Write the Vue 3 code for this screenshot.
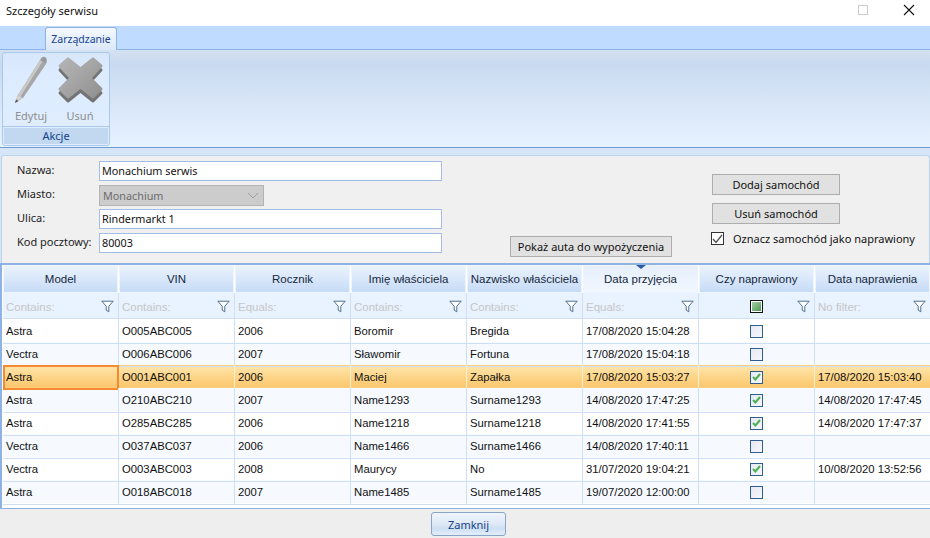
<script setup>
const columns = [
  { title: "Model", filter: "Contains:" },
  { title: "VIN", filter: "Contains:" },
  { title: "Rocznik", filter: "Equals:" },
  { title: "Imię właściciela", filter: "Contains:" },
  { title: "Nazwisko właściciela", filter: "Contains:" },
  { title: "Data przyjęcia", filter: "Equals:", sorted: true },
  { title: "Czy naprawiony", filter: "", tri: true },
  { title: "Data naprawienia", filter: "No filter:" },
];
const rows = [
  ["Astra", "O005ABC005", "2006", "Boromir", "Bregida", "17/08/2020 15:04:28", false, ""],
  ["Vectra", "O006ABC006", "2007", "Sławomir", "Fortuna", "17/08/2020 15:04:18", false, ""],
  ["Astra", "O001ABC001", "2006", "Maciej", "Zapałka", "17/08/2020 15:03:27", true, "17/08/2020 15:03:40"],
  ["Astra", "O210ABC210", "2007", "Name1293", "Surname1293", "14/08/2020 17:47:25", true, "14/08/2020 17:47:45"],
  ["Astra", "O285ABC285", "2006", "Name1218", "Surname1218", "14/08/2020 17:41:55", true, "14/08/2020 17:47:37"],
  ["Vectra", "O037ABC037", "2006", "Name1466", "Surname1466", "14/08/2020 17:40:11", false, ""],
  ["Vectra", "O003ABC003", "2008", "Maurycy", "No", "31/07/2020 19:04:21", true, "10/08/2020 13:52:56"],
  ["Astra", "O018ABC018", "2007", "Name1485", "Surname1485", "19/07/2020 12:00:00", false, ""],
];
const selected = 2;
</script>

<template>
  <div class="window">
    <div class="titlebar">
      <span class="title">Szczegóły serwisu</span>
      <div class="winbtns">
        <svg width="12" height="12" viewBox="0 0 12 12"><rect x="1.5" y="1.5" width="9" height="9" fill="none" stroke="#cccccc" /></svg>
        <svg width="12" height="12" viewBox="0 0 12 12"><path d="M1 1L11 11M11 1L1 11" stroke="#111" stroke-width="1.1" /></svg>
      </div>
    </div>

    <div class="tabstrip">
      <div class="tab">Zarządzanie</div>
    </div>

    <div class="ribbon">
      <div class="group">
        <div class="group-items">
          <div class="rbtn">
            <svg width="34" height="48" viewBox="0 0 34 48">
              <path d="M1 47L4 39L26 4L32 8L9 42Z" fill="#a6a6a6" />
              <path d="M4 39L26 4L28.5 5.5L6.5 40.5Z" fill="#c8c8c8" />
              <path d="M26 4Q28 0 31 1Q34 3 32 8Z" fill="#999999" />
              <path d="M1 47L4 39L9 42Z" fill="#cfcfcf" />
              <path d="M1 47L2 43.5L4.5 45Z" fill="#555" />
            </svg>
            <span>Edytuj</span>
          </div>
          <div class="rbtn">
            <svg width="47" height="48" viewBox="0 0 47 48">
              <defs>
                <linearGradient id="xface" x1="0" y1="0" x2="1" y2="1">
                  <stop offset="0" stop-color="#b4b4b4" />
                  <stop offset="0.5" stop-color="#a4a4a4" />
                  <stop offset="1" stop-color="#8f8f8f" />
                </linearGradient>
              </defs>
              <path d="M3 14L11 6L23.5 17L36 6L44 14L33 26L44 37L36 45L23.5 35L11 45L3 37L14 26Z" fill="#747474" stroke="#747474" stroke-width="3" stroke-linejoin="round" />
              <path d="M3 10L11 3L23.5 13L36 3L44 10L33 22L44 33L36 41L23.5 31L11 41L3 33L14 22Z" fill="url(#xface)" stroke="url(#xface)" stroke-width="3" stroke-linejoin="round" />
            </svg>
            <span>Usuń</span>
          </div>
        </div>
        <div class="group-label">Akcje</div>
      </div>
    </div>

    <div class="details">
      <div class="form">
        <label>Nazwa:</label>
        <div class="input">Monachium serwis</div>
        <label>Miasto:</label>
        <div class="select">
          Monachium
          <svg width="12" height="7" viewBox="0 0 12 7"><path d="M1 1L6 6L11 1" fill="none" stroke="#9e9e9e" /></svg>
        </div>
        <label>Ulica:</label>
        <div class="input">Rindermarkt 1</div>
        <label>Kod pocztowy:</label>
        <div class="input">80003</div>
      </div>
      <button class="btn show-btn">Pokaż auta do wypożyczenia</button>
      <div class="actions">
        <button class="btn car-btn">Dodaj samochód</button>
        <button class="btn car-btn">Usuń samochód</button>
        <div class="check-row">
          <span class="plain-check">
            <svg width="11" height="10" viewBox="0 0 11 10"><path d="M1 5L4 8.5L10 1" fill="none" stroke="#555" stroke-width="1.4" /></svg>
          </span>
          Oznacz samochód jako naprawiony
        </div>
      </div>
    </div>

    <div class="grid">
      <div class="row head">
        <div v-for="c in columns" :key="c.title" class="hcell" :class="{ sorted: c.sorted }">
          <span v-if="c.sorted" class="sort-arrow"></span>
          {{ c.title }}
        </div>
      </div>
      <div class="row filter">
        <div v-for="c in columns" :key="c.title" class="fcell">
          <span class="ftext">{{ c.filter }}</span>
          <span v-if="c.tri" class="tri"><i></i></span>
          <svg width="13" height="13" viewBox="0 0 13 13" class="funnel">
            <path d="M0.8 1.2H12.2L7.8 6.2V11.8L5.2 10.2V6.2Z" fill="#fff" stroke="#4f6f8f" />
          </svg>
        </div>
      </div>
      <div v-for="(r, i) in rows" :key="r[1]" class="row data" :class="{ alt: i % 2 === 1, sel: i === selected }">
        <div v-for="(v, j) in r" :key="j" class="cell" :class="{ current: i === selected && j === 0, center: j === 6 }">
          <span v-if="j === 6" class="cb">
            <svg v-if="v" width="9" height="8" viewBox="0 0 9 8"><path d="M1 4L3.4 6.5L8 1" fill="none" stroke="#4caf50" stroke-width="2" /></svg>
          </span>
          <template v-else>{{ v }}</template>
        </div>
      </div>
    </div>

    <div class="footer">
      <button class="close-btn">Zamknij</button>
    </div>
  </div>
</template>

<style scoped>
.window {
  width: 930px;
  height: 538px;
  overflow: hidden;
  display: flex;
  flex-direction: column;
  background: #d6e5f8;
  font-family: "Liberation Sans", Arial, sans-serif;
  font-size: 11.5px;
  color: #111;
}
.titlebar {
  height: 26px;
  flex: none;
  background: #fff;
  display: flex;
  justify-content: space-between;
  padding: 3px 0 0 6px;
  box-sizing: border-box;
}
.title {
  font-family: "Noto Sans", sans-serif;
  font-size: 11px;
  line-height: 15px;
}
.winbtns {
  display: flex;
  gap: 34px;
  padding-right: 15px;
  padding-top: 1px;
}
.tabstrip {
  height: 24px;
  flex: none;
  background: #bfdbff;
  padding: 1px 0 0 45px;
  box-sizing: border-box;
  border-bottom: 1px solid #8db2e3;
  display: flex;
}
.tab {
  width: 72px;
  height: 23px;
  box-sizing: border-box;
  border: 1px solid #8db2e3;
  border-bottom: none;
  border-radius: 3px 3px 0 0;
  background: linear-gradient(#f5f9ff, #dbe8f9);
  color: #15428b;
  font-family: "Noto Sans", sans-serif;
  font-size: 10.5px;
  text-align: center;
  line-height: 23px;
}
.ribbon {
  height: 98px;
  flex: none;
  box-sizing: border-box;
  padding: 2px 2px;
  background: linear-gradient(#d4e1f1 0, #c8daef 15%, #cfdff3 30%, #e7f2ff 100%);
  border-bottom: 1px solid #6f9ad3;
}
.group {
  width: 108px;
  height: 94px;
  box-sizing: border-box;
  border: 1px solid #a9c8ee;
  border-radius: 3px;
  background: linear-gradient(#d7e6f9 0, #dcebff 20%, #e0eeff 100%);
  display: flex;
  flex-direction: column;
}
.group-items {
  height: 74px;
  box-sizing: border-box;
  padding: 0 0 2px 6px;
  display: flex;
  gap: 3px;
  border-bottom: 1px solid #a9c8ee;
}
.rbtn {
  display: flex;
  flex-direction: column;
  align-items: center;
  justify-content: flex-end;
  color: #8d8d8d;
  font-family: "Noto Sans", sans-serif;
  font-size: 11px;
  line-height: 16px;
}
.rbtn:first-child {
  width: 44px;
}
.rbtn:nth-child(2) {
  width: 48px;
}
.rbtn svg {
  margin-bottom: 4px;
}
.group-label {
  flex: 1;
  margin: 1px;
  background: #c1d8f0;
  color: #15428b;
  font-family: "Noto Sans", sans-serif;
  font-size: 11px;
  text-align: center;
  line-height: 16px;
}
.details {
  height: 108px;
  flex: none;
  margin-top: 7px;
  box-sizing: border-box;
  border: 1px solid #bcd3ee;
  border-bottom: none;
  border-radius: 3px 3px 0 0;
  margin-left: 1px;
  background: #f0f0f0;
  display: flex;
  font-family: "Noto Sans", sans-serif;
  font-size: 11px;
}
.form {
  width: 441px;
  flex: none;
  display: grid;
  grid-template-columns: 82px 343px;
  grid-auto-rows: 24px;
  padding: 3px 0 0 15px;
  box-sizing: border-box;
  align-items: center;
}
.form label {
  color: #222;
  padding-bottom: 4px;
}
.input {
  height: 20px;
  box-sizing: border-box;
  background: #fff;
  border: 1px solid #a3bde3;
  padding-left: 2px;
  line-height: 18px;
  color: #111;
  font-size: 10.8px;
}
.select {
  width: 165px;
  height: 21px;
  box-sizing: border-box;
  background: #cccccc;
  border: 1px solid #b4b4b4;
  color: #6d6d6d;
  padding: 0 4px 0 3px;
  font-size: 10.8px;
  display: flex;
  align-items: center;
  justify-content: space-between;
}
.btn {
  height: 21px;
  box-sizing: border-box;
  background: #e1e1e1;
  border: 1px solid #adadad;
  font-family: "Noto Sans", sans-serif;
  font-size: 11px;
  color: #111;
  padding: 0;
}
.show-btn {
  width: 162px;
  flex: none;
  margin: 80px 0 0 67px;
}
.actions {
  flex: none;
  margin-left: 40px;
  padding-top: 18px;
  display: flex;
  flex-direction: column;
  gap: 8px;
}
.car-btn {
  width: 128px;
}
.check-row {
  display: flex;
  align-items: center;
  gap: 9px;
  margin-top: -1px;
  margin-left: -1px;
  white-space: nowrap;
  color: #111;
}
.plain-check {
  width: 13px;
  height: 13px;
  box-sizing: border-box;
  background: #fff;
  border: 1px solid #333;
  display: flex;
  align-items: center;
  justify-content: center;
}
.grid {
  height: 246px;
  flex: none;
  box-sizing: border-box;
  background: #fff;
  border-top: 2px solid #8db2e3;
  border-left: 2px solid #8db2e3;
  border-bottom: 1px solid #8db2e3;
  padding-left: 1px;
  overflow: hidden;
}
.row {
  display: grid;
  grid-template-columns: repeat(8, 116px);
}
.head {
  height: 28px;
}
.hcell {
  position: relative;
  box-sizing: border-box;
  border-right: 1px solid #fff;
  border-bottom: 1px solid #a9c4e8;
  background: linear-gradient(#ecf4fe, #c5daf6);
  box-shadow: inset 0 0 0 1px #eef5ff;
  text-align: center;
  line-height: 28px;
  white-space: nowrap;
  color: #15283c;
}
.hcell.sorted {
  background: linear-gradient(#e6effb 10%, #f3f8ff);
}
.sort-arrow {
  position: absolute;
  left: 53px;
  top: 0;
  border: 5px solid transparent;
  border-top: 4px solid #2c5a9e;
  border-bottom: none;
}
.filter {
  height: 26px;
}
.fcell {
  position: relative;
  box-sizing: border-box;
  background: #e8f3ff;
  border-right: 1px solid #cfe0f5;
  border-bottom: 1px solid #cfe0f5;
  padding: 2px 4px 0 3px;
  display: flex;
  align-items: center;
  justify-content: space-between;
  color: #c6c6c6;
}
.ftext:empty {
  display: none;
}
.tri {
  width: 13px;
  height: 13px;
  box-sizing: border-box;
  border: 1px solid #111;
  padding: 1px;
  margin-left: 48px;
  background: #fff;
  display: block;
}
.tri i {
  display: block;
  width: 100%;
  height: 100%;
  background: linear-gradient(135deg, #a6cda6, #4f9a55);
}
.funnel {
  flex: none;
}
.data {
  height: 23px;
  font-size: 11.3px;
}
.data.alt {
  background: #f6faff;
}
.data.sel {
  background: linear-gradient(#ffe7b0 0, #fdd68a 50%, #fbc56d 100%);
  box-shadow: inset 0 1px 0 #ffcf7a, inset 0 -1px 0 #ffcf7a;
}
.cell {
  box-sizing: border-box;
  border-right: 1px solid #cfe0f5;
  border-bottom: 1px solid #cfe0f5;
  padding-left: 3px;
  line-height: 24px;
  white-space: nowrap;
}
.sel .cell {
  border-right-color: #fff0d0;
  border-bottom-color: transparent;
}
.cell.current {
  border: 2px solid #f58a33;
  padding-left: 1px;
  line-height: 20px;
}
.cell.center {
  display: flex;
  align-items: center;
  justify-content: center;
  padding-left: 0;
}
.cb {
  width: 13px;
  height: 13px;
  box-sizing: border-box;
  border: 1px solid #2f5f8f;
  background: linear-gradient(135deg, #e6e9f2, #f6f7fb);
  display: flex;
  align-items: center;
  justify-content: center;
}
.footer {
  flex: 1;
  background: #eeeeee;
  display: flex;
  padding: 3px 0 0 431px;
}
.close-btn {
  width: 75px;
  height: 24px;
  box-sizing: border-box;
  border: 1px solid #8aa4c8;
  border-radius: 3px;
  background: linear-gradient(#f0f5fc 0, #dfe9f6 50%, #cddff3 70%, #e3eefb 100%);
  color: #15428b;
  font-family: "Noto Sans", sans-serif;
  font-size: 11px;
  padding: 0;
}
</style>

<style>
html,
body {
  margin: 0;
  background: #f0f0f0;
}
</style>
